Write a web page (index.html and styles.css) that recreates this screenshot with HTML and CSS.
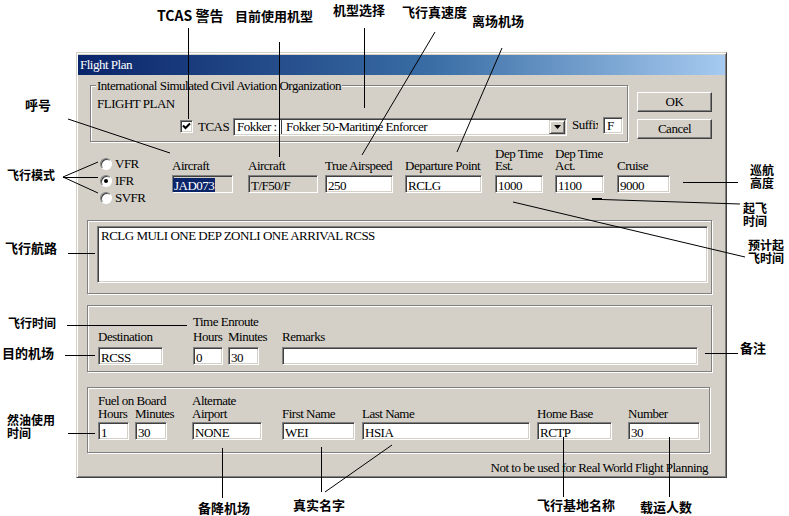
FILE: index.html
```html
<!DOCTYPE html>
<html>
<head>
<meta charset="utf-8">
<title>Flight Plan</title>
<link rel="stylesheet" href="styles.css">
</head>
<body>
<div class="page">
  <div class="dialog">
    <div class="titlebar">Flight Plan</div>
    <div class="content">
      <div class="top-row">
        <fieldset class="group org">
          <legend>International Simulated Civil Aviation Organization</legend>
          <div class="fp-title">FLIGHT PLAN</div>
          <div class="aircraft-row">
            <span class="chk"><svg viewBox="0 0 9 9" width="9" height="9"><polyline points="1,3.5 3.5,6 8,1.5" fill="none" stroke="#000" stroke-width="2"/></svg></span>
            <span class="chk-label">TCAS</span>
            <div class="combo">
              <span class="combo-code">Fokker :</span>
              <span class="combo-text">Fokker 50-Maritime Enforcer</span>
              <span class="combo-btn"><svg viewBox="0 0 7 4" width="7" height="4"><polygon points="0,0 7,0 3.5,4" fill="#000"/></svg></span>
            </div>
            <span class="suffix-label">Suffix</span>
            <div class="tb suffix">F</div>
          </div>
        </fieldset>
        <div class="btns">
          <div class="btn">OK</div>
          <div class="btn">Cancel</div>
        </div>
      </div>

      <div class="fields-row">
        <div class="radios">
          <div class="radio-row"><span class="radio"></span>VFR</div>
          <div class="radio-row"><span class="radio on"></span>IFR</div>
          <div class="radio-row"><span class="radio"></span>SVFR</div>
        </div>
        <div class="field"><div class="lbl">Aircraft</div><div class="tb ro w61 selbox"><span class="sel">JAD073</span></div></div>
        <div class="field"><div class="lbl">Aircraft</div><div class="tb ro w70">T/F50/F</div></div>
        <div class="field"><div class="lbl">True Airspeed</div><div class="tb w68">250</div></div>
        <div class="field"><div class="lbl">Departure Point</div><div class="tb w77">RCLG</div></div>
        <div class="field"><div class="lbl">Dep Time<br>Est.</div><div class="tb w48">1000</div></div>
        <div class="field"><div class="lbl">Dep Time<br>Act.</div><div class="tb w49">1100</div></div>
        <div class="field"><div class="lbl">Cruise</div><div class="tb w53">9000</div></div>
      </div>

      <div class="group route">
        <div class="tb area">RCLG MULI ONE DEP ZONLI ONE ARRIVAL RCSS</div>
      </div>

      <div class="group dest">
        <div class="span-te">Time Enroute</div>
        <div class="glbl c1">Destination</div>
        <div class="glbl c2">Hours</div>
        <div class="glbl c3">Minutes</div>
        <div class="glbl c4">Remarks</div>
        <div class="tb w65 c1">RCSS</div>
        <div class="tb w30 c2">0</div>
        <div class="tb w31 c3">30</div>
        <div class="tb w416 c4"></div>
      </div>

      <div class="group fuel">
        <div class="span-fob">Fuel on Board</div>
        <div class="glbl r1 c3">Alternate</div>
        <div class="glbl r2 c1">Hours</div>
        <div class="glbl r2 c2">Minutes</div>
        <div class="glbl r2 c3">Airport</div>
        <div class="glbl r2 c4">First Name</div>
        <div class="glbl r2 c5">Last Name</div>
        <div class="glbl r2 c6">Home Base</div>
        <div class="glbl r2 c7">Number</div>
        <div class="tb r3 c1 w31">1</div>
        <div class="tb r3 c2 w32">30</div>
        <div class="tb r3 c3 w70">NONE</div>
        <div class="tb r3 c4 w73">WEI</div>
        <div class="tb r3 c5 w168">HSIA</div>
        <div class="tb r3 c6 w75">RCTP</div>
        <div class="tb r3 c7 w72">30</div>
      </div>

      <div class="note">Not to be used for Real World Flight Planning</div>
    </div>
  </div>

  <svg class="leaders" width="789" height="516" viewBox="0 0 789 516">
    <g stroke="#000" stroke-width="1" fill="none">
      <line x1="188.5" y1="28" x2="188.5" y2="119"/>
      <line x1="279.5" y1="42" x2="279.5" y2="157"/>
      <line x1="364.5" y1="28" x2="364.5" y2="108"/>
      <line x1="435" y1="32" x2="362" y2="155"/>
      <line x1="502" y1="48" x2="457" y2="152"/>
      <line x1="68" y1="119" x2="170" y2="153"/>
      <line x1="63" y1="177" x2="98" y2="162"/>
      <line x1="63" y1="177.5" x2="98" y2="177.5"/>
      <line x1="63" y1="177" x2="98" y2="193"/>
      <line x1="683" y1="182.5" x2="738" y2="182.5"/>
      <line x1="602" y1="199.5" x2="740" y2="204"/>
      <line x1="513" y1="202" x2="745" y2="257"/>
      <line x1="68" y1="253.5" x2="95" y2="253.5"/>
      <line x1="67" y1="325.5" x2="187" y2="325.5"/>
      <line x1="65" y1="355.5" x2="95" y2="355.5"/>
      <line x1="705" y1="353.5" x2="738" y2="353.5"/>
      <line x1="68" y1="433.5" x2="95" y2="433.5"/>
      <line x1="222.5" y1="448" x2="222.5" y2="498"/>
      <line x1="321.5" y1="447" x2="321.5" y2="492"/>
      <line x1="325" y1="492" x2="392" y2="445"/>
      <line x1="563.5" y1="437" x2="563.5" y2="497"/>
      <line x1="669.5" y1="437" x2="669.5" y2="497"/>
    </g>
    <line x1="592" y1="199" x2="602" y2="199" stroke="#000" stroke-width="2"/>
  </svg>

  <div class="ann a-tcas">TCAS 警告</div>
  <div class="ann a-cur">目前使用机型</div>
  <div class="ann a-sel">机型选择</div>
  <div class="ann a-tas">飞行真速度</div>
  <div class="ann a-dep">离场机场</div>
  <div class="ann a-call">呼号</div>
  <div class="ann a-mode">飞行模式</div>
  <div class="ann two a-cruise"><div>巡航</div><div>高度</div></div>
  <div class="ann two a-deptime"><div>起飞</div><div>时间</div></div>
  <div class="ann two a-est"><div>预计起</div><div>飞时间</div></div>
  <div class="ann a-route">飞行航路</div>
  <div class="ann a-ete">飞行时间</div>
  <div class="ann a-dest">目的机场</div>
  <div class="ann a-rmk">备注</div>
  <div class="ann two a-fuel"><div>然油使用</div><div>时间</div></div>
  <div class="ann a-alt">备降机场</div>
  <div class="ann a-name">真实名字</div>
  <div class="ann a-home">飞行基地名称</div>
  <div class="ann a-num">载运人数</div>
</div>
</body>
</html>
```
FILE: styles.css
```css
html, body {
  margin: 0;
  padding: 0;
  background: #fff;
}

.page {
  position: relative;
  width: 789px;
  height: 516px;
  box-sizing: border-box;
  padding: 52px 0 0 76px;
  font-family: "Liberation Serif", "Times New Roman", serif;
  font-size: 13px;
  letter-spacing: -0.5px;
  color: #000;
  overflow: hidden;
}

/* ---------- dialog window ---------- */
.dialog {
  width: 651px;
  height: 426px;
  box-sizing: border-box;
  background: #d4d0c8;
  border: 1px solid;
  border-color: #d4d0c8 #404040 #404040 #d4d0c8;
  box-shadow: inset 1px 1px #fff, inset -1px -1px #808080;
  padding: 2px 1px 1px 1px;
  display: flex;
  flex-direction: column;
}

.titlebar {
  height: 20px;
  line-height: 20px;
  padding-left: 2px;
  color: #fff;
  background: linear-gradient(to right, #0a246a 0%, #3a6ea5 55%, #a6caf0 100%);
}

.content {
  flex: 1;
  padding: 4px 13px 0 9px;
  display: flex;
  flex-direction: column;
  align-items: flex-start;
}

/* ---------- etched group boxes ---------- */
.group {
  box-sizing: border-box;
  border: 1px solid #808080;
  box-shadow: inset 1px 1px #fff, 1px 1px #fff;
}

.top-row {
  display: flex;
  margin-left: 3px;
}

fieldset.org {
  margin: 0;
  min-inline-size: 0;
  width: 538px;
  padding: 5px 2px 5px 6px;
}

fieldset.org legend {
  padding: 0 1px;
  margin-left: -1px;
  line-height: 13px;
  background: #d4d0c8;
}

.fp-title {
  line-height: 13px;
}

.aircraft-row {
  display: flex;
  align-items: flex-start;
  height: 19px;
  margin-top: 7px;
  padding-left: 83px;
  line-height: 14px;
}

.chk {
  width: 13px;
  height: 13px;
  box-sizing: border-box;
  margin-top: 3px;
  background: #fff;
  border: 1px solid;
  border-color: #808080 #fff #fff #808080;
  box-shadow: inset 1px 1px #404040, inset -1px -1px #d4d0c8;
  display: flex;
  align-items: center;
  justify-content: center;
}

.chk-label {
  width: 35px;
  margin-left: 5px;
  margin-top: 3px;
}

.combo {
  width: 334px;
  height: 18px;
  margin-top: 1px;
  box-sizing: border-box;
  display: flex;
  background: #fff;
  border: 1px solid;
  border-color: #808080 #fff #fff #808080;
  box-shadow: inset 1px 1px #404040, inset -1px -1px #d4d0c8;
  padding: 1px;
  white-space: nowrap;
}

.combo-code {
  width: 47px;
  box-sizing: border-box;
  padding-left: 2px;
  border-right: 1px solid #404040;
}

.combo-text {
  flex: 1;
  padding-left: 4px;
}

.combo-btn {
  width: 16px;
  height: 14px;
  box-sizing: border-box;
  background: #d4d0c8;
  border: 1px solid;
  border-color: #d4d0c8 #404040 #404040 #d4d0c8;
  box-shadow: inset 1px 1px #fff, inset -1px -1px #808080;
  display: flex;
  align-items: center;
  justify-content: center;
}

.suffix-label {
  width: 26px;
  margin-left: 5px;
  margin-right: 2px;
  margin-top: 1px;
  overflow: hidden;
  white-space: nowrap;
}

/* ---------- buttons ---------- */
.btns {
  margin-left: 9px;
  margin-top: 13px;
  display: flex;
  flex-direction: column;
  gap: 7px;
}

.btn {
  width: 75px;
  height: 20px;
  box-sizing: border-box;
  text-align: center;
  line-height: 18px;
  background: #d4d0c8;
  border: 1px solid;
  border-color: #fff #404040 #404040 #fff;
  box-shadow: inset -1px -1px #808080;
}

/* ---------- sunken text boxes ---------- */
.tb {
  box-sizing: border-box;
  height: 18px;
  background: #fff;
  border: 1px solid;
  border-color: #808080 #fff #fff #808080;
  box-shadow: inset 1px 1px #404040, inset -1px -1px #d4d0c8;
  padding: 2px 0 0 2px;
  line-height: 15px;
  white-space: nowrap;
  overflow: hidden;
}

.tb.ro { background: #d4d0c8; }
.tb.selbox { padding-left: 0; }
.sel { background: #0a246a; color: #fff; padding: 0 1px; }

.tb.suffix {
  width: 20px;
  height: 17px;
  margin-left: 3px;
  padding-top: 0;
  padding-left: 3px;
}

.w30 { width: 30px; }
.w31 { width: 31px; }
.w32 { width: 32px; }
.w48 { width: 48px; }
.w49 { width: 49px; }
.w53 { width: 53px; }
.w61 { width: 61px; }
.w65 { width: 65px; }
.w68 { width: 68px; }
.w70 { width: 70px; }
.w72 { width: 72px; }
.w73 { width: 73px; }
.w75 { width: 75px; }
.w77 { width: 77px; }
.w168 { width: 168px; }
.w416 { width: 416px; }

/* ---------- aircraft / speed row ---------- */
.fields-row {
  display: grid;
  grid-template-columns: 85px 76px 77px 80px 90px 60px 62px 53px;
  margin-top: 6px;
}

.radios {
  padding-left: 13px;
  padding-top: 9px;
}

.radio-row {
  display: flex;
  align-items: flex-start;
  height: 17px;
  line-height: 13px;
}

.radio {
  width: 12px;
  height: 12px;
  box-sizing: border-box;
  margin-top: 1px;
  margin-right: 3px;
  border-radius: 50%;
  background: #fff;
  border: 1px solid;
  border-color: #808080 #fff #fff #808080;
  box-shadow: inset 1px 1px #404040;
  display: flex;
  align-items: center;
  justify-content: center;
}

.radio.on::after {
  content: "";
  width: 4px;
  height: 4px;
  border-radius: 50%;
  background: #000;
}

.field .lbl {
  height: 24px;
  line-height: 12px;
  display: flex;
  flex-direction: column;
  justify-content: flex-end;
  white-space: nowrap;
}

.field .tb { margin-top: 3px; }

/* ---------- route ---------- */
.route {
  width: 625px;
  margin-top: 12px;
  padding: 5px 3px 10px 9px;
}

.tb.area {
  height: 57px;
  padding: 2px 0 0 3px;
  line-height: 14px;
}

/* ---------- destination ---------- */
.dest {
  width: 625px;
  margin-top: 11px;
  padding: 10px 13px 6px 10px;
  display: grid;
  grid-template-columns: 95px 35px 54px 416px;
  grid-template-rows: 15px 12px 22px;
  line-height: 12px;
}

.dest .span-te { grid-column: 2 / span 2; grid-row: 1; white-space: nowrap; }
.dest .glbl { grid-row: 2; white-space: nowrap; }
.dest .tb { grid-row: 3; margin-top: 4px; }

.c1 { grid-column: 1; }
.c2 { grid-column: 2; }
.c3 { grid-column: 3; }
.c4 { grid-column: 4; }
.c5 { grid-column: 5; }
.c6 { grid-column: 6; }
.c7 { grid-column: 7; }

/* ---------- fuel / names ---------- */
.fuel {
  width: 623px;
  margin-top: 15px;
  padding: 6px 9px 12px 10px;
  display: grid;
  grid-template-columns: 37px 57px 90px 80px 175px 91px 72px;
  grid-template-rows: 13px 13px 20px;
  line-height: 13px;
}

.fuel .span-fob { grid-column: 1 / span 2; grid-row: 1; white-space: nowrap; }
.fuel .glbl { white-space: nowrap; }
.r1 { grid-row: 1; }
.r2 { grid-row: 2; }
.r3 { grid-row: 3; }
.fuel .tb { margin-top: 2px; }

.note {
  align-self: flex-end;
  margin: 8px 4px 0 0;
  line-height: 13px;
  white-space: nowrap;
}

/* ---------- annotation callouts ---------- */
.leaders {
  position: absolute;
  left: 0;
  top: 0;
  pointer-events: none;
}

.ann {
  position: absolute;
  font-family: "Noto Sans CJK SC", "Noto Sans", sans-serif;
  font-weight: 700;
  font-size: 13px;
  line-height: 13px;
  letter-spacing: 0;
  white-space: nowrap;
  color: #000;
}

.ann.two {
  display: flex;
  flex-direction: column;
  font-size: 12px;
  line-height: 13px;
}

.a-tcas { left: 157px; top: 8px; font-size: 14px; line-height: 14px; }
.a-cur { left: 235px; top: 9px; }
.a-sel { left: 333px; top: 3px; }
.a-tas { left: 402px; top: 5px; }
.a-dep { left: 472px; top: 14px; }
.a-call { left: 25px; top: 98px; }
.a-mode { left: 7px; top: 168px; font-size: 12px; }
.a-cruise { left: 750px; top: 163px; }
.a-deptime { left: 743px; top: 201px; }
.a-est { left: 748px; top: 238px; }
.a-route { left: 5px; top: 241px; }
.a-ete { left: 8px; top: 316px; font-size: 12px; }
.a-dest { left: 2px; top: 346px; }
.a-rmk { left: 740px; top: 341px; }
.a-fuel { left: 7px; top: 413px; }
.a-alt { left: 198px; top: 501px; }
.a-name { left: 293px; top: 498px; }
.a-home { left: 537px; top: 498px; }
.a-num { left: 640px; top: 500px; }
```
